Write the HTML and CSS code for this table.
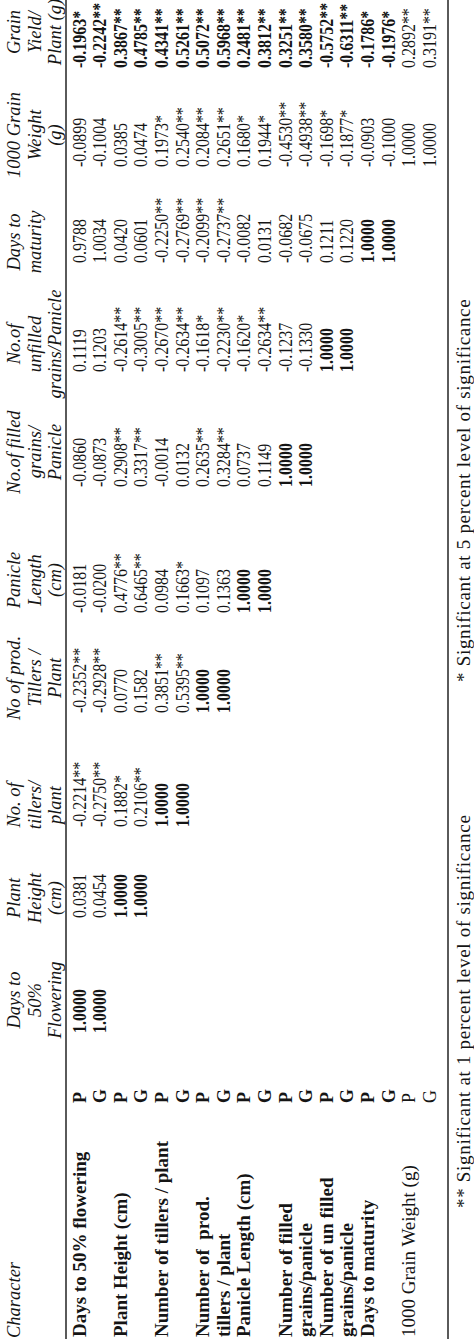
FILE: index.html
```html
<!DOCTYPE html>
<html>
<head>
<meta charset="utf-8">
<link rel="stylesheet" href="styles.css">
</head>
<body>
<div class="page">
  <div class="head grid">
    <div class="hc1"><span>Character</span></div>
    <div></div>
    <div class="h h3"><span>Days to</span><span>50%</span><span>Flowering</span></div>
    <div class="h h4"><span>Plant</span><span>Height</span><span>(cm)</span></div>
    <div class="h h5"><span>No. of</span><span>tillers/</span><span>plant</span></div>
    <div class="h h6"><span>No of prod.</span><span>Tillers /</span><span>Plant</span></div>
    <div class="h h7"><span>Panicle</span><span>Length</span><span>(cm)</span></div>
    <div class="h h8"><span>No.of filled</span><span>grains/</span><span>Panicle</span></div>
    <div class="h h9"><span>No.of</span><span>unfilled</span><span>grains/Panicle</span></div>
    <div class="h h10"><span>Days to</span><span>maturity</span></div>
    <div class="h h11"><span>1000 Grain</span><span>Weight</span><span>(g)</span></div>
    <div class="h h12"><span>Grain</span><span>Yield/</span><span>Plant (g)</span></div>
  </div>

  <div class="body grid">
    <!-- Days to 50% flowering -->
    <div class="lbl">Days to 50% flowering</div>
    <div class="pg">P</div>
    <div class="v b">1.0000</div><div class="v">0.0381</div><div class="v">-0.2214**</div><div class="v">-0.2352**</div><div class="v">-0.0181</div><div class="v">-0.0860</div><div class="v">0.1119</div><div class="v">0.9788</div><div class="v">-0.0899</div><div class="v b">-0.1963*</div>
    <div class="pg">G</div>
    <div class="v b">1.0000</div><div class="v">0.0454</div><div class="v">-0.2750**</div><div class="v">-0.2928**</div><div class="v">-0.0200</div><div class="v">-0.0873</div><div class="v">0.1203</div><div class="v">1.0034</div><div class="v">-0.1004</div><div class="v b">-0.2242**</div>

    <!-- Plant Height -->
    <div class="lbl">Plant Height (cm)</div>
    <div class="pg">P</div>
    <div class="v"></div><div class="v b">1.0000</div><div class="v">0.1882*</div><div class="v">0.0770</div><div class="v">0.4776**</div><div class="v">0.2908**</div><div class="v">-0.2614**</div><div class="v">0.0420</div><div class="v">0.0385</div><div class="v b">0.3867**</div>
    <div class="pg">G</div>
    <div class="v"></div><div class="v b">1.0000</div><div class="v">0.2106**</div><div class="v">0.1582</div><div class="v">0.6465**</div><div class="v">0.3317**</div><div class="v">-0.3005**</div><div class="v">0.0601</div><div class="v">0.0474</div><div class="v b">0.4785**</div>

    <!-- Number of tillers / plant -->
    <div class="lbl">Number of tillers / plant</div>
    <div class="pg">P</div>
    <div class="v"></div><div class="v"></div><div class="v b">1.0000</div><div class="v">0.3851**</div><div class="v">0.0984</div><div class="v">-0.0014</div><div class="v">-0.2670**</div><div class="v">-0.2250**</div><div class="v">0.1973*</div><div class="v b">0.4341**</div>
    <div class="pg">G</div>
    <div class="v"></div><div class="v"></div><div class="v b">1.0000</div><div class="v">0.5395**</div><div class="v">0.1663*</div><div class="v">0.0132</div><div class="v">-0.2634**</div><div class="v">-0.2769**</div><div class="v">0.2540**</div><div class="v b">0.5261**</div>

    <!-- Number of prod. tillers / plant -->
    <div class="lbl">Number of&nbsp; prod.<br>tillers / plant</div>
    <div class="pg">P</div>
    <div class="v"></div><div class="v"></div><div class="v"></div><div class="v b">1.0000</div><div class="v">0.1097</div><div class="v">0.2635**</div><div class="v">-0.1618*</div><div class="v">-0.2099**</div><div class="v">0.2084**</div><div class="v b">0.5072**</div>
    <div class="pg">G</div>
    <div class="v"></div><div class="v"></div><div class="v"></div><div class="v b">1.0000</div><div class="v">0.1363</div><div class="v">0.3284**</div><div class="v">-0.2230**</div><div class="v">-0.2737**</div><div class="v">0.2651**</div><div class="v b">0.5968**</div>

    <!-- Panicle Length -->
    <div class="lbl">Panicle Length (cm)</div>
    <div class="pg">P</div>
    <div class="v"></div><div class="v"></div><div class="v"></div><div class="v"></div><div class="v b">1.0000</div><div class="v">0.0737</div><div class="v">-0.1620*</div><div class="v">-0.0082</div><div class="v">0.1680*</div><div class="v b">0.2481**</div>
    <div class="pg">G</div>
    <div class="v"></div><div class="v"></div><div class="v"></div><div class="v"></div><div class="v b">1.0000</div><div class="v">0.1149</div><div class="v">-0.2634**</div><div class="v">0.0131</div><div class="v">0.1944*</div><div class="v b">0.3812**</div>

    <!-- Number of filled grains/panicle -->
    <div class="lbl">Number of filled<br>grains/panicle</div>
    <div class="pg">P</div>
    <div class="v"></div><div class="v"></div><div class="v"></div><div class="v"></div><div class="v"></div><div class="v b">1.0000</div><div class="v">-0.1237</div><div class="v">-0.0682</div><div class="v">-0.4530**</div><div class="v b">0.3251**</div>
    <div class="pg">G</div>
    <div class="v"></div><div class="v"></div><div class="v"></div><div class="v"></div><div class="v"></div><div class="v b">1.0000</div><div class="v">-0.1330</div><div class="v">-0.0675</div><div class="v">-0.4938**</div><div class="v b">0.3580**</div>

    <!-- Number of un filled grains/panicle -->
    <div class="lbl">Number of un filled<br>grains/panicle</div>
    <div class="pg">P</div>
    <div class="v"></div><div class="v"></div><div class="v"></div><div class="v"></div><div class="v"></div><div class="v"></div><div class="v b">1.0000</div><div class="v">0.1211</div><div class="v">-0.1698*</div><div class="v b">-0.5752**</div>
    <div class="pg">G</div>
    <div class="v"></div><div class="v"></div><div class="v"></div><div class="v"></div><div class="v"></div><div class="v"></div><div class="v b">1.0000</div><div class="v">0.1220</div><div class="v">-0.1877*</div><div class="v b">-0.6311**</div>

    <!-- Days to maturity -->
    <div class="lbl">Days to maturity</div>
    <div class="pg">P</div>
    <div class="v"></div><div class="v"></div><div class="v"></div><div class="v"></div><div class="v"></div><div class="v"></div><div class="v"></div><div class="v b">1.0000</div><div class="v">-0.0903</div><div class="v b">-0.1786*</div>
    <div class="pg">G</div>
    <div class="v"></div><div class="v"></div><div class="v"></div><div class="v"></div><div class="v"></div><div class="v"></div><div class="v"></div><div class="v b">1.0000</div><div class="v">-0.1000</div><div class="v b">-0.1976*</div>

    <!-- 1000 Grain Weight -->
    <div class="lbl reg">1000 Grain Weight (g)</div>
    <div class="pg reg">P</div>
    <div class="v"></div><div class="v"></div><div class="v"></div><div class="v"></div><div class="v"></div><div class="v"></div><div class="v"></div><div class="v"></div><div class="v">1.0000</div><div class="v">0.2892**</div>
    <div class="pg reg">G</div>
    <div class="v"></div><div class="v"></div><div class="v"></div><div class="v"></div><div class="v"></div><div class="v"></div><div class="v"></div><div class="v"></div><div class="v">1.0000</div><div class="v">0.3191**</div>
  </div>

  <div class="notes">
    <span>** Significant at 1 percent level of significance</span>
    <span>* Significant at 5 percent level of significance</span>
  </div>
</div>
</body>
</html>
```

FILE: styles.css
```css
html {
  overflow: hidden;
  background: #ffffff;
}

body {
  margin: 0;
  padding: 0;
  width: 474px;
  height: 1339px;
  background: #ffffff;
}

.page {
  width: 1380px;
  height: 474px;
  transform-origin: 0 0;
  transform: translateY(1339px) rotate(-90deg);
  font-family: "Liberation Serif", "Times New Roman", serif;
  color: #151515;
  background: #ffffff;
}

.grid {
  display: grid;
  grid-template-columns: 232px 74px 115px 91px 114px 100px 126px 115px 109px 96px 99px 109px;
}

/* header band */
.head {
  height: 61px;
  padding-top: 4px;
  border-bottom: 2px solid #5a5a5a;
  font-style: italic;
  font-size: 18.5px;
  line-height: 20.5px;
}

.hc1 {
  padding-left: 1px;
  white-space: nowrap;
}

.h {
  display: flex;
  flex-direction: column;
  align-items: center;
  white-space: nowrap;
}

.h3 { padding-right: 49px; }
.h4 { padding-right: 51px; }
.h5 { padding-right: 70px; }
.h6 { padding-right: 30px; }
.h7 { padding-right: 60px; }
.h8 { padding-right: 45px; }
.h9 { padding-right: 53px; }
.h10 { padding-right: 54px; }
.h11 { padding-right: 35px; }
.h12 { padding-right: 37px; }

/* body rows */
.body {
  grid-auto-rows: 20.6px;
  padding-top: 2.7px;
  padding-bottom: 6.5px;
  border-bottom: 2px solid #5a5a5a;
  line-height: 20.6px;
}

.lbl {
  grid-row: span 2;
  padding-left: 2px;
  font-weight: bold;
  font-size: 19px;
  white-space: nowrap;
}

.pg {
  padding-left: 4px;
  font-weight: bold;
  font-size: 18px;
}

.reg {
  font-weight: normal;
}

.v {
  font-size: 19px;
  white-space: nowrap;
  transform: scaleX(0.84);
  transform-origin: 0 50%;
}

.v.b {
  font-weight: bold;
}

/* footnotes */
.notes {
  display: grid;
  grid-template-columns: 526px auto;
  padding-left: 131px;
  margin-top: 5px;
  font-size: 19px;
  letter-spacing: 0.7px;
  line-height: 19px;
  white-space: nowrap;
}
```
